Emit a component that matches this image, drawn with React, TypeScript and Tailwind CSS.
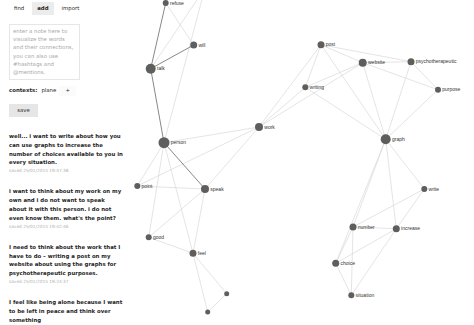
import React from "react"

type N = [number, number, number]

const nodes: Record<string, N> = {
  top: [205, -12, 4],
  refuse: [165.7, 3, 3],
  will: [193.7, 45, 3.5],
  talk: [150.7, 68.7, 5],
  person: [164, 142.7, 5.5],
  work: [259, 127, 4],
  point: [137.3, 186, 3],
  speak: [205, 189, 4],
  good: [148.7, 237.3, 3],
  feel: [193, 253.3, 3.5],
  n1: [226.7, 293.7, 2.5],
  n2: [207.7, 312, 2.5],
  post: [321, 44.7, 3.5],
  website: [362.7, 62.7, 4],
  psychotherapeutic: [411, 61.7, 3.5],
  writing: [305.3, 87.3, 3],
  purpose: [438, 89.7, 3],
  graph: [385.7, 139.3, 5],
  write: [424.3, 189, 3],
  number: [353, 227, 3.5],
  increase: [396.3, 228.7, 3.5],
  choice: [335.7, 263.3, 3.5],
  situation: [351.3, 295.3, 3],
}

const light: [string, string][] = [
  ["top", "talk"], ["top", "person"], ["refuse", "will"],
  ["person", "work"], ["person", "point"], ["person", "good"], ["person", "feel"],
  ["point", "work"], ["point", "speak"], ["work", "speak"],
  ["speak", "good"], ["speak", "feel"], ["good", "feel"],
  ["feel", "n1"], ["feel", "n2"], ["n1", "n2"],
  ["work", "post"], ["work", "writing"], ["work", "website"],
  ["post", "writing"], ["post", "website"], ["post", "psychotherapeutic"], ["post", "graph"],
  ["website", "psychotherapeutic"], ["website", "purpose"], ["website", "graph"], ["website", "writing"],
  ["psychotherapeutic", "purpose"], ["psychotherapeutic", "graph"],
  ["writing", "graph"], ["purpose", "graph"],
  ["graph", "write"], ["graph", "number"], ["graph", "choice"], ["graph", "increase"],
  ["write", "number"], ["write", "increase"],
  ["number", "increase"], ["number", "choice"], ["number", "situation"],
  ["increase", "choice"], ["increase", "situation"], ["choice", "situation"],
]

const dark: [string, string][] = [
  ["refuse", "talk"], ["talk", "will"], ["talk", "person"], ["person", "speak"],
]

const notes = [
  {
    text: "well... i want to write about how you can use graphs to increase the number of choices available to you in every situation.",
    saved: "saved 25/01/2015 19:47:38",
  },
  {
    text: "i want to think about my work on my own and i do not want to speak about it with this person. i do not even know them. what's the point?",
    saved: "saved 25/01/2015 19:42:46",
  },
  {
    text: "I need to think about the work that I have to do – writing a post on my website about using the graphs for psychotherapeutic purposes.",
    saved: "saved 25/01/2015 19:24:37",
  },
  {
    text: "I feel like being alone because I want to be left in peace and think over something",
    saved: "",
  },
]

function Graph() {
  return (
    <svg width={344} height={325} viewBox="130 0 344 325" className="block">
      {light.map(([a, b]) => (
        <line
          key={a + b}
          x1={nodes[a][0]} y1={nodes[a][1]} x2={nodes[b][0]} y2={nodes[b][1]}
          stroke="#d2d2d2" strokeWidth={0.6}
        />
      ))}
      {dark.map(([a, b]) => (
        <line
          key={a + b}
          x1={nodes[a][0]} y1={nodes[a][1]} x2={nodes[b][0]} y2={nodes[b][1]}
          stroke="#7a7a7a" strokeWidth={0.9}
        />
      ))}
      {Object.entries(nodes).map(([name, [x, y, r]]) => (
        <g key={name}>
          <circle cx={x} cy={y} r={r} fill="#5e5e5e" />
          {!["top", "n1", "n2"].includes(name) && (
            <text
              x={x + r + 1.3}
              y={y + 1.7}
              fontSize={5}
              fill="#333"
              fontFamily="'Liberation Sans', Arial, sans-serif"
            >
              {name}
            </text>
          )}
        </g>
      ))}
    </svg>
  )
}

export default function App() {
  return (
    <div className="flex h-[325px] w-[474px] overflow-hidden bg-white">
      <div className="w-[130px] shrink-0 h-[325px] overflow-hidden pl-[9px] font-['DejaVu_Sans',Verdana,sans-serif] text-[#2b2b2b]">
        <div className="flex gap-[3px] pt-[2px] text-[5.4px] leading-[13px]">
          <span className="px-[5px]">find</span>
          <span className="px-[5px] bg-[#ececec] font-bold">add</span>
          <span className="px-[5px]">import</span>
        </div>

        <textarea
          className="mt-[9px] block w-[71px] h-[56px] resize-none border border-[#e6e6e6] px-[3px] pt-[2px] text-[5.4px] leading-[8.2px] outline-none placeholder:text-[#a8a8a8]"
          placeholder="enter a note here to visualize the words and their connections, you can also use #hashtags and @mentions."
        />

        <div className="mt-[5px] flex items-center h-[11px] text-[5.4px]">
          <span className="font-bold">contexts:</span>
          <span className="ml-[4px]">plane</span>
          <span className="ml-[3px] w-[17px] h-[10px] flex items-center justify-center bg-[#fbfbfb]">+</span>
        </div>

        <button className="mt-[8px] block w-[29px] h-[13px] bg-[#e6e6e6] text-[5.4px] text-[#333]">
          save
        </button>

        <div className="mt-[15px] w-[114.8px]">
          {notes.map((n, i) => (
            <div key={i} className="mb-[12.2px]">
              <p className="text-[5.4px] leading-[8.8px] font-bold text-[#262626]">{n.text}</p>
              {n.saved && (
                <p className="text-[4.3px] leading-[8px] text-[#b0b0b0]">{n.saved}</p>
              )}
            </div>
          ))}
        </div>
      </div>
      <Graph />
    </div>
  )
}
